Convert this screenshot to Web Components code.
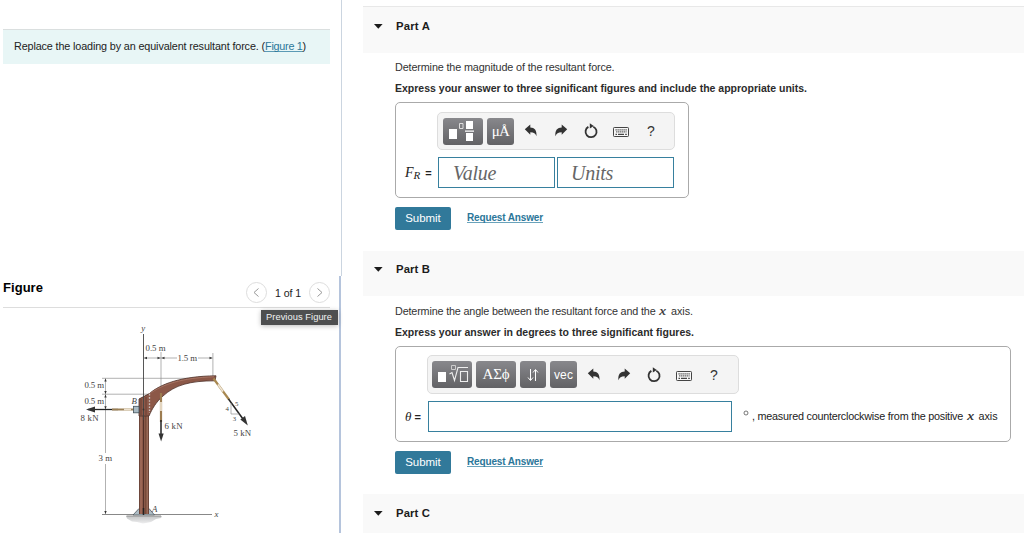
<!DOCTYPE html>
<html lang="en">
<head>
<meta charset="utf-8">
<title>Resultant force</title>
<style>
  html, body { margin: 0; height: 533px; overflow: hidden; background: #fff; }
  body { font: 10.8px "Liberation Sans", Arial, sans-serif; color: #222; }
</style>
</head>
<body>
<problem-page></problem-page>
<script>
const attach = (host, html) => {
  host.attachShadow({ mode: 'open' }).innerHTML = html;
  return host.shadowRoot;
};

// Text run tracked so that it fills the width given by its "w" attribute.
class FitText extends HTMLElement {
  connectedCallback() {
    if (this.shadowRoot) return;
    const w = +this.getAttribute('w');
    const root = attach(this, `<style>:host{display:inline-block;white-space:pre;width:${w}px;flex:none}span{display:inline-block}</style><span><slot></slot></span>`);
    const span = root.querySelector('span');
    const n = this.textContent.length;
    span.style.letterSpacing = ((w - span.getBoundingClientRect().width) / n).toFixed(4) + 'px';
  }
}

const ICONS = {
  undo: '<path d="M.8 5.300 6.300.5v3c4.200.1 6.500 2.600 6.200 8.700-.9-2.900-2.600-4-6.200-4v2.600z" fill="#333"/>',
  redo: '<path d="M13.200 5.300 7.700.5v3C3.500 3.600.900 6.100 1.400 12.200c1-2.900 2.700-4 6.300-4v2.600z" fill="#333"/>',
  reset: '<path d="M4.400 2.900A5.500 5.500 0 1 0 9.300 2.700" fill="none" stroke="#333" stroke-width="1.800"/><path d="M5.800-.8v5.200L9.800 2z" fill="#333"/>',
  keyboard: '<rect x="-.5" y="3.500" width="15" height="9" rx=".8" fill="#f7f7f7" stroke="#444"/><path d="M1.500 5.800h11.500M2.200 7.900h10.500" stroke="#444" stroke-width="1.200" stroke-dasharray="1.200 .8"/><path d="M1.500 10.300h1.500M4 10.300h6M11.200 10.300h1.600" stroke="#444" stroke-width="1.200"/>'
};

class ToolIcon extends HTMLElement {
  connectedCallback() {
    if (this.shadowRoot) return;
    attach(this, `<style>:host{display:block;width:14px;height:14px;flex:none}svg{display:block;overflow:visible}</style>
      <svg width="14" height="14" viewBox="0 0 14 14">${ICONS[this.getAttribute('name')]}</svg>`);
  }
}

class ToolButton extends HTMLElement {
  connectedCallback() {
    if (this.shadowRoot) return;
    attach(this, `<style>:host{display:flex;align-items:center;justify-content:center;box-sizing:border-box;height:27px;flex:none;width:${this.getAttribute('w')}px;
      border-radius:3px;background:linear-gradient(#88888c,#626265);color:#fff}</style><slot></slot>`);
  }
}

class ToolBar extends HTMLElement {
  connectedCallback() {
    if (this.shadowRoot) return;
    attach(this, `<style>
      :host{display:flex;align-items:center;box-sizing:border-box;height:38px;border:1px solid #ddd;border-radius:5px;background:#f4f4f4;padding:0 0 0 5px}
      .b{display:flex;gap:4px;margin-right:10px}.i{display:flex;align-items:center;gap:16px}
      .q{font-size:14px;width:14px;text-align:center;color:#333}
    </style>
    <div class="b"><slot></slot></div>
    <div class="i"><tool-icon name="undo"></tool-icon><tool-icon name="redo"></tool-icon><tool-icon name="reset"></tool-icon><tool-icon name="keyboard"></tool-icon><span class="q">?</span></div>`);
  }
}

class PartHeader extends HTMLElement {
  connectedCallback() {
    if (this.shadowRoot) return;
    attach(this, `<style>
      :host{display:flex;box-sizing:border-box;background:#f9f9f9;padding:11px 0 0 11px;gap:13px;font-weight:bold;font-size:11.300px;line-height:14px;color:#1c1c1c}
      svg{display:block;margin-top:5px}
    </style><svg width="9" height="5" viewBox="0 0 9 5"><path d="M0 0h8.600L4.300 4.800z" fill="#1c1c1c"/></svg><slot></slot>`);
  }
}

class AnswerActions extends HTMLElement {
  connectedCallback() {
    if (this.shadowRoot) return;
    attach(this, `<style>
      :host{display:flex;gap:16px;align-items:flex-start}
      .s{width:56px;height:23px;border-radius:2px;background:#31799a;color:#fff;font-size:11.500px;line-height:23px;display:flex;justify-content:center}
      .r{font-weight:bold;font-size:10px;line-height:11px;color:#2b7699;border-bottom:1px solid #6aa3bb;margin-top:5px;height:10px;display:flex}
    </style><div class="s"><fit-text w="35.500">Submit</fit-text></div><div class="r"><fit-text w="76">Request Answer</fit-text></div>`);
  }
}

class FrameFigure extends HTMLElement {
  connectedCallback() {
    if (this.shadowRoot) return;
    attach(this, `<style>
      :host{display:block}
      svg{display:block}
      text{font:8.800px "Liberation Serif",serif;fill:#444}
      .i{font-style:italic}.s{font-size:6.800px}
      .d{stroke:#909090;stroke-width:.7;fill:none}.h{fill:#333}
    </style>
    <svg width="190" height="215" viewBox="70 318 190 215">
      <defs>
        <linearGradient id="col"><stop offset="0" stop-color="#58362d"/><stop offset=".18" stop-color="#a7705e"/><stop offset=".35" stop-color="#8b5848"/><stop offset=".42" stop-color="#42251f"/><stop offset=".58" stop-color="#9a6553"/><stop offset=".68" stop-color="#68402f"/><stop offset=".82" stop-color="#a97562"/><stop offset="1" stop-color="#573429"/></linearGradient>
        <linearGradient id="gr" x2="0" y2="1"><stop stop-color="#c3c5c6"/><stop offset="1" stop-color="#eeeeef"/></linearGradient>
      </defs>
      <path d="M126 516h36l-1 2-5 1-5 3-8 1.500-6-1.500-5-.5-5-3z" fill="url(#gr)"/>
      <path class="d" d="M102 514.500H212" style="stroke:#555"/>
      <path d="M133 515 139 508.500h10l5.500 6.500z" fill="#aebdc6" stroke="#4b565c" stroke-width=".8"/>
      <path d="M126.500 516h34.500" stroke="#8d8d8d" stroke-width="1"/>
      <path class="d" d="M102 378.300H200M102 394.200H161M161 352V393M212.900 353V376M144 358h68.500"/>
      <path class="d" d="M105.500 378.500V514"/>
      <path d="M139 399 149 394V514H139z" fill="url(#col)"/>
      <path d="M139 399 149.500 393.500C160 384.500 180 376.200 216 375.800L215 380.800C190 380.800 175 385 163 396 156 402 152 409 149 416L139 416z" fill="#8c5848" stroke="#4c3028" stroke-width=".8"/>
      <path d="M149 394C163 384 182 378 214 376.700" stroke="#b98675" fill="none" stroke-width=".6"/>
      <path d="M141 399V415M146 397V415" stroke="#683e32" stroke-width="1"/>
      <path d="M149.500 394V413" stroke="#c9c2c0" stroke-width="1.300" stroke-dasharray="1.600 1.500"/>
      <path d="M143.500 334V420" stroke="#444" stroke-width=".9"/>
      <path d="M143.500 508v7" stroke="#222" stroke-width="1.500"/>
      <path d="M88 409.500H118" stroke="#222" stroke-width="1.300"/>
      <path class="h" d="M86 409.500 95 406.600V412.400z"/>
      <path d="M112 409.500H134" stroke="#9c8156" stroke-width="2"/>
      <path d="M124 409.500H131" stroke="#eee2cf" stroke-width="1.800"/>
      <rect x="133.500" y="406.300" width="5.500" height="6.500" fill="#a9bac3" stroke="#42525a" stroke-width=".8"/>
      <circle cx="143.500" cy="409.500" r=".9" class="h"/>
      <path d="M161 393V422" stroke="#9c7c50" stroke-width="2.200"/><path d="M161 402V411" stroke="#f0e6d4" stroke-width="1.700"/>
      <path d="M161 420V434" stroke="#222" stroke-width="1.500"/><path class="h" d="M158.500 433.500h5.200L161.100 441.500z"/>
      <path d="M213.500 378.500 229 399.500" stroke="#a88850" stroke-width="2.200"/><path d="M218 384.500 223 391.500" stroke="#efe5d5" stroke-width="1.800"/>
      <path d="M228.500 399 243 419" stroke="#222" stroke-width="1.500"/><path class="h" d="M247.800 425.500 240.300 419.500 245 416z"/>
      <path class="d" d="M231 403V414h8.500"/>
      <g class="h"><path d="M144 358l3-1.200v2.400zM160.500 358l-3-1.200v2.400zM161.500 358l3-1.200v2.400zM212.500 358l-3-1.200v2.400z"/>
      <path d="M105.500 378.500l-1.200 3h2.400zM105.500 394l-1.200-3h2.400zM105.500 394.500l-1.200 3h2.400zM105.500 409.300l-1.200-3h2.400zM105.500 514l-1.200-3h2.400z"/></g>
      <path fill="#fff" d="M177 354h21v8h-21zM97 453h16v11H97z"/>
      <text class="i" x="141.200" y="330.500">y</text>
      <text x="145.500" y="350.500" textLength="20">0.5 m</text>
      <text x="177.500" y="361" textLength="19.500">1.5 m</text>
      <text x="84.500" y="388" textLength="19.500">0.5 m</text>
      <text x="84.500" y="404" textLength="19.500">0.5 m</text>
      <text class="i" x="131.500" y="404">B</text>
      <text x="80.500" y="420.500" textLength="18">8 kN</text>
      <text x="164.500" y="429" textLength="18">6 kN</text>
      <text x="233.500" y="435.500" textLength="17.500">5 kN</text>
      <text x="98.500" y="460.500" textLength="13.500">3 m</text>
      <text class="s" x="235" y="405.500">5</text><text class="s" x="225.500" y="410.500">4</text><text class="s" x="232.800" y="420.500">3</text>
      <text class="i" x="152" y="512">A</text><text class="i" x="214.500" y="517">x</text>
    </svg>`);
  }
}

class FigurePane extends HTMLElement {
  connectedCallback() {
    if (this.shadowRoot) return;
    attach(this, `<style>
      :host{display:grid;grid-template-rows:276px 1fr;width:342px;box-sizing:border-box;flex:none}
      .top{border-right:1px solid #cbd5e0;padding:29px 11px 0 3px}
      .bot{border-right:2px solid #b5c4dc;margin-right:1px;padding:0 9px 0 3px;position:relative}
      .p{box-sizing:border-box;height:35px;background:#e8f6f6;border-top:1px solid #dadfdf;padding:9px 0 0 11px;line-height:14px;white-space:nowrap;display:flex}
      a{color:#2b7699;border-bottom:1px solid #5b9ab5;height:12px}
      .h{height:31px;border-bottom:1px solid #ddd;display:flex;justify-content:space-between}
      h2{font-size:13px;line-height:16px;margin:4px 0 0;color:#000}
      .n{display:flex;align-items:center;margin-top:5px;height:22px}
      .n fit-text{margin:2px 8px 0 8px;font-size:10.600px}
      .t{position:absolute;left:261px;top:34px;width:77px;height:15px;background:#4e4f50;color:#f2f2f2;font-size:9.300px;line-height:15px;box-sizing:border-box;padding-left:5px;box-shadow:0 1px 5px #0004}
      frame-figure{margin:10px 0 0 67px}
    </style>
    <div class="top"><div class="p"><fit-text w="247.500">Replace the loading by an equivalent resultant force. </fit-text>(<a><fit-text w="37.500">Figure 1</fit-text></a>)</div></div>
    <div class="bot">
      <div class="h"><h2><fit-text w="40">Figure</fit-text></h2>
        <div class="n">
          <svg width="21" height="21" viewBox="0 0 21 21" fill="none"><circle cx="10.500" cy="10.500" r="10" stroke="#ddd"/><path d="M12.500 6.500 8 10.500l4.500 4" stroke="#999"/></svg>
          <fit-text w="26">1 of 1</fit-text>
          <svg width="21" height="21" viewBox="0 0 21 21" fill="none"><circle cx="10.500" cy="10.500" r="10" stroke="#ddd"/><path d="M8.500 6.500 13 10.500l-4.500 4" stroke="#999"/></svg>
        </div></div>
      <frame-figure></frame-figure>
      <div class="t"><fit-text w="66">Previous Figure</fit-text></div>
    </div>`);
  }
}

class ProblemPage extends HTMLElement {
  connectedCallback() {
    attach(this, `<style>
      :host{display:flex;width:1024px;height:533px;overflow:hidden;background:#fff}
      main{margin-left:21px;padding-top:6px;flex:1;min-width:0}
      section{padding-left:32px;box-sizing:border-box;display:flex;flex-direction:column;align-items:flex-start}
      .a{height:47px;border-top:1px solid #e8e8e8;padding-top:12px}
      .b{height:45px}.c{height:39px;padding-top:12px}
      .sa{height:198px;padding-top:7px}.sb{height:198px;padding-top:8px}
      .l{line-height:14px;height:14px;color:#333;display:flex;white-space:pre;align-items:baseline}
      .bold{font-weight:bold;font-size:10.500px;margin-top:7px;color:#2b2b2b}
      .box{box-sizing:border-box;border:1px solid #aaa;border-radius:5px;height:96px;margin-top:7px;padding-top:9px}
      .ba{width:294px}.bb{width:616px;padding-top:8px}
      .ta{width:238px;margin-left:41px}.tb{width:312px;margin-left:31px;height:39px;padding-left:4px}
      .row{display:flex;margin-top:7px;align-items:center}
      .in{box-sizing:border-box;height:31px;border:1px solid #37809e;background:#fff;font:italic 20px/30px "Liberation Serif",serif;color:#666;padding-left:14px;width:117px}
      .fr{font:italic 14px/18px "Liberation Serif",serif;margin-left:9px;width:33px;color:#222;white-space:nowrap;box-sizing:border-box}
      .fr small{font-size:11px;position:relative;top:2px}
      .fr b{font:bold 11px "Liberation Sans";margin-left:5px}
      .x{font:italic 12px/12px "Liberation Serif",serif;display:inline-block;width:6px;transform:scaleX(1.250);margin:0 5px 0 4.500px;-webkit-text-stroke:.2px #333}
      answer-actions{margin-top:9px}
      .mu{font:15px "Liberation Serif",serif}.gk{font:15px "Liberation Serif",serif}.vec{font-size:12px}
      svg{display:block}
      .deg{display:block;width:4px;height:4px;border:1px solid #555;border-radius:50%;box-sizing:content-box;transform:scale(.8);margin:-8px 3px 0 11px}
    </style>
    <figure-pane></figure-pane>
    <main>
      <part-header class="a"><fit-text w="34">Part A</fit-text></part-header>
      <section class="sa">
        <div class="l"><fit-text w="219.500">Determine the magnitude of the resultant force.</fit-text></div>
        <div class="l bold"><fit-text w="412">Express your answer to three significant figures and include the appropriate units.</fit-text></div>
        <div class="box ba">
          <tool-bar class="ta">
            <tool-button w="40"><svg width="40" height="27" viewBox="0 0 40 27"><path fill="#fff" d="M6 11h8v10H6zM23 3h7v8h-7zM23 15h7v8h-7zM22 12.500h9v1.200h-9z"/><path d="M16.500 5.500h3.500v5h-3.500z" fill="none" stroke="#ddd"/></svg></tool-button>
            <tool-button w="27"><fit-text class="mu" w="17.500">μÅ</fit-text></tool-button>
          </tool-bar>
          <div class="row"><div class="fr">F<small>R</small><b>=</b></div>
            <div class="in"><fit-text w="43">Value</fit-text></div><div class="in" style="margin-left:2px;padding-left:13px"><fit-text w="42">Units</fit-text></div></div>
        </div>
        <answer-actions></answer-actions>
      </section>
      <part-header class="b"><fit-text w="34">Part B</fit-text></part-header>
      <section class="sb">
        <div class="l"><fit-text w="260.500">Determine the angle between the resultant force and the</fit-text><span class="x">x</span><fit-text w="22">axis.</fit-text></div>
        <div class="l bold"><fit-text w="299">Express your answer in degrees to three significant figures.</fit-text></div>
        <div class="box bb">
          <tool-bar class="tb">
            <tool-button w="40"><svg width="40" height="27" viewBox="0 0 40 27" fill="none"><path fill="#fff" d="M6 11h8v10H6z"/><path d="M19.500 4.500h4v4h-4z" stroke="#ccc"/><path d="M17.500 13l2.500-1.500 2.500 8L26 6.500h10M28.500 10.500h7v10h-7z" stroke="#eee" stroke-width="1.100"/></svg></tool-button>
            <tool-button w="40"><fit-text class="gk" w="27">ΑΣϕ</fit-text></tool-button>
            <tool-button w="26"><svg width="14" height="14" viewBox="0 0 14 14" fill="none" stroke="#fff"><path d="M4.500 1v11M2 9.500 4.500 12.500 7 9.500M9.500 13V2M7 4.500 9.500 1.500 12 4.500"/></svg></tool-button>
            <tool-button w="27"><fit-text class="vec" w="19">vec</fit-text></tool-button>
          </tool-bar>
          <div class="row"><div class="fr" style="width:23px;font-size:13px">θ<b style="margin-left:3px">=</b></div>
            <div class="in" style="width:304px"></div><span class="deg"></span>
            <div class="l" style="color:#222;margin-top:-2px"><fit-text w="211">, measured counterclockwise from the positive</fit-text><span class="x">x</span><fit-text w="19">axis</fit-text></div></div>
        </div>
        <answer-actions></answer-actions>
      </section>
      <part-header class="c"><fit-text w="34">Part C</fit-text></part-header>
    </main>`);
  }
}

customElements.define('fit-text', FitText);
customElements.define('tool-icon', ToolIcon);
customElements.define('tool-button', ToolButton);
customElements.define('tool-bar', ToolBar);
customElements.define('part-header', PartHeader);
customElements.define('answer-actions', AnswerActions);
customElements.define('frame-figure', FrameFigure);
customElements.define('figure-pane', FigurePane);
customElements.define('problem-page', ProblemPage);
</script>
</body>
</html>
